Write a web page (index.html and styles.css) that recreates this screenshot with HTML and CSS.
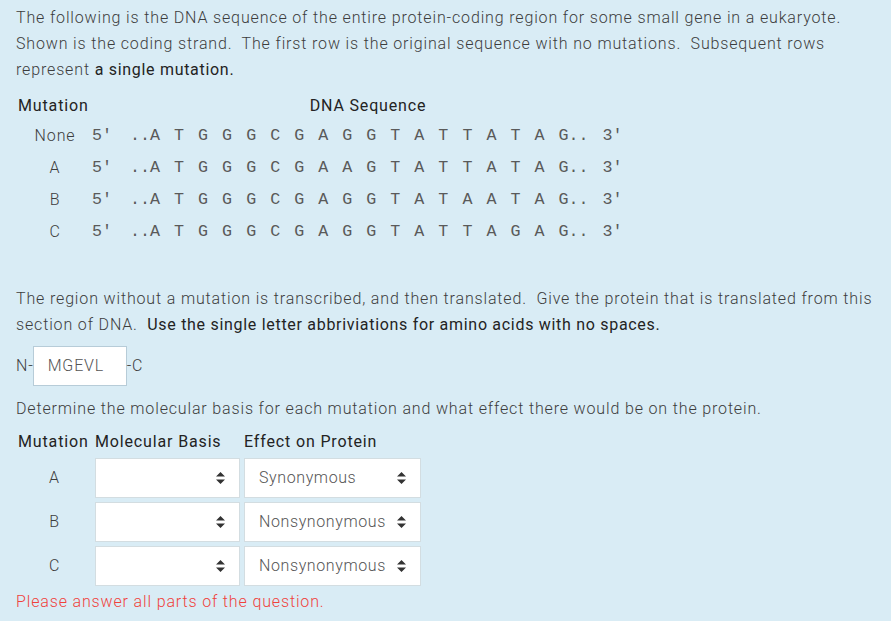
FILE: index.html
```html
<!DOCTYPE html>
<html lang="en">
<head>
<meta charset="utf-8">
<title>DNA mutation question</title>
<link rel="stylesheet" href="styles.css">
</head>
<body>
<main class="question">
  <p class="text">The following is the DNA sequence of the entire protein-coding region for some small gene in a eukaryote. Shown is the coding strand.&nbsp; The first row is the original sequence with no mutations.&nbsp; Subsequent rows represent <strong>a single mutation.</strong></p>

  <div class="dna">
    <div class="dna-head mut-head">Mutation</div>
    <div class="dna-head seq-head">DNA Sequence</div>

    <div class="mut">None</div><div class="five">5′</div><div class="seq">..A T G G G C G A G G T A T T A T A G.. 3′</div>
    <div class="mut">A</div><div class="five">5′</div><div class="seq">..A T G G G C G A A G T A T T A T A G.. 3′</div>
    <div class="mut">B</div><div class="five">5′</div><div class="seq">..A T G G G C G A G G T A T A A T A G.. 3′</div>
    <div class="mut">C</div><div class="five">5′</div><div class="seq">..A T G G G C G A G G T A T T A G A G.. 3′</div>
  </div>

  <p class="text second">The region without a mutation is transcribed, and then translated.&nbsp; Give the protein that is translated from this section of DNA.&nbsp; <strong>Use the single letter abbriviations for amino acids with no spaces.</strong></p>

  <div class="protein">
    <span class="term">N-</span>
    <div class="field">MGEVL</div>
    <span class="term">-C</span>
  </div>

  <p class="text third">Determine the molecular basis for each mutation and what effect there would be on the protein.</p>

  <div class="basis">
    <div class="bh">Mutation</div>
    <div class="bh">Molecular Basis</div>
    <div class="bh">Effect on Protein</div>

    <div class="bl">A</div>
    <div class="select"><span></span><svg class="arr" width="9" height="12" viewBox="0 0 9 12"><path d="M4.5 0 L9 4.6 L0 4.6 Z M0 7.4 L9 7.4 L4.5 12 Z" fill="#333"/></svg></div>
    <div class="select"><span>Synonymous</span><svg class="arr" width="9" height="12" viewBox="0 0 9 12"><path d="M4.5 0 L9 4.6 L0 4.6 Z M0 7.4 L9 7.4 L4.5 12 Z" fill="#333"/></svg></div>

    <div class="bl">B</div>
    <div class="select"><span></span><svg class="arr" width="9" height="12" viewBox="0 0 9 12"><path d="M4.5 0 L9 4.6 L0 4.6 Z M0 7.4 L9 7.4 L4.5 12 Z" fill="#333"/></svg></div>
    <div class="select"><span>Nonsynonymous</span><svg class="arr" width="9" height="12" viewBox="0 0 9 12"><path d="M4.5 0 L9 4.6 L0 4.6 Z M0 7.4 L9 7.4 L4.5 12 Z" fill="#333"/></svg></div>

    <div class="bl">C</div>
    <div class="select"><span></span><svg class="arr" width="9" height="12" viewBox="0 0 9 12"><path d="M4.5 0 L9 4.6 L0 4.6 Z M0 7.4 L9 7.4 L4.5 12 Z" fill="#333"/></svg></div>
    <div class="select"><span>Nonsynonymous</span><svg class="arr" width="9" height="12" viewBox="0 0 9 12"><path d="M4.5 0 L9 4.6 L0 4.6 Z M0 7.4 L9 7.4 L4.5 12 Z" fill="#333"/></svg></div>
  </div>

  <p class="error">Please answer all parts of the question.</p>
</main>
</body>
</html>
```

FILE: styles.css
```css
html, body {
  margin: 0;
  padding: 0;
}

body {
  background: #d9ecf5;
  font-family: Roboto, "Liberation Sans", sans-serif;
  font-weight: 300;
  font-size: 16px;
  line-height: 26px;
  letter-spacing: 0.85px;
  color: #3d3d3d;
}

.question {
  padding: 5px 0 0 16px;
}

.text {
  margin: 0;
}

.text strong {
  font-weight: 400;
  color: #232323;
  letter-spacing: 0.7px;
}

/* DNA table */
.dna {
  display: grid;
  grid-template-columns: 74px 40px 512px;
  margin: 9px 0 0 2px;
}

.dna-head {
  font-weight: 400;
  color: #232323;
  height: 28px;
  line-height: 28px;
}

.mut-head {
  grid-column: 1;
  white-space: nowrap;
}

.seq-head {
  grid-column: 2 / 4;
  text-align: center;
}

.mut,
.five,
.seq {
  height: 32px;
  line-height: 32px;
}

.mut {
  text-align: center;
}

.five,
.seq {
  font-family: "Courier New", "Nimbus Mono PS", "FreeMono", "Liberation Mono", monospace;
  font-size: 16.7px;
  font-weight: 400;
  letter-spacing: 0;
  color: #5a5a5a;
  word-spacing: 4px;
  white-space: pre;
}

.seq {
  margin-left: -2px;
}

.second {
  margin-top: 38px;
}

/* protein field */
.protein {
  display: flex;
  align-items: center;
  margin-top: 8px;
  height: 40px;
}

.field {
  box-sizing: border-box;
  width: 94px;
  height: 40px;
  margin-left: -1px;
  background: #fff;
  border: 1px solid #b7ccd8;
  padding-left: 14px;
  line-height: 38px;
  color: #555;
}

.third {
  margin-top: 10px;
}

/* basis table */
.basis {
  display: grid;
  grid-template-columns: 73px 145px 177px;
  column-gap: 4px;
  row-gap: 4px;
  margin: 8px 0 0 2px;
}

.bh {
  font-weight: 400;
  color: #232323;
  line-height: 24px;
  height: 24px;
  white-space: nowrap;
}

.bl {
  text-align: center;
  line-height: 40px;
}

.select {
  box-sizing: border-box;
  height: 40px;
  background: #fff;
  border: 1px solid #d3dde1;
  display: flex;
  align-items: center;
  justify-content: space-between;
  padding: 0 14px 0 14px;
  color: #555;
  letter-spacing: 0.6px;
}

.arr {
  display: block;
  flex: none;
}

.error {
  margin: 3px 0 0 0;
  color: #f0423c;
}
```
